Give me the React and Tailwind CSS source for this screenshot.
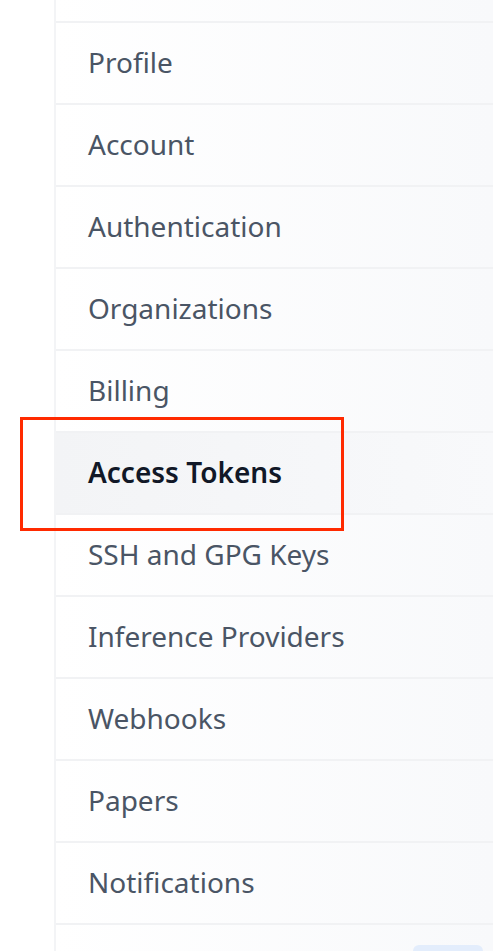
const items = [
  "Profile",
  "Account",
  "Authentication",
  "Organizations",
  "Billing",
  "Access Tokens",
  "SSH and GPG Keys",
  "Inference Providers",
  "Webhooks",
  "Papers",
  "Notifications",
];

export default function App() {
  return (
    <div
      className="relative w-[493px] h-[951px] overflow-hidden bg-white flex"
      style={{ fontFamily: '"Source Sans Pro", "Noto Sans", sans-serif' }}
    >
      <div className="w-[54px] shrink-0 bg-white" />
      <div className="flex-1 flex flex-col border-l-2 border-[#f3f4f6]">
        <div className="h-[23px] shrink-0 bg-gradient-to-r from-white to-[#f8f9fb] border-b-2 border-[#f1f2f4]" />
        {items.map((label) => {
          const active = label === "Access Tokens";
          return (
            <div
              key={label}
              className={
                active
                  ? "h-[82px] shrink-0 flex items-center pl-[32px] pb-[2px] border-b-2 border-[#f1f2f4] bg-gradient-to-r from-[#f3f4f6] to-[#f8f9fb] text-[28px] font-semibold text-[#111827]"
                  : "h-[82px] shrink-0 flex items-center pl-[32px] pb-[2px] border-b-2 border-[#f1f2f4] bg-gradient-to-r from-white to-[#f8f9fb] text-[28px] text-[#4a5565]"
              }
            >
              {label}
            </div>
          );
        })}
        <div className="flex-1 bg-gradient-to-r from-white to-[#f8f9fb] flex justify-end items-end pr-[10px]">
          <div className="w-[70px] h-[6px] rounded-t-lg bg-[#e3edfc]" />
        </div>
      </div>
      <div className="absolute left-[20px] top-[417px] w-[324px] h-[114px] border-[3px] border-[#ff2a00]" />
    </div>
  );
}
